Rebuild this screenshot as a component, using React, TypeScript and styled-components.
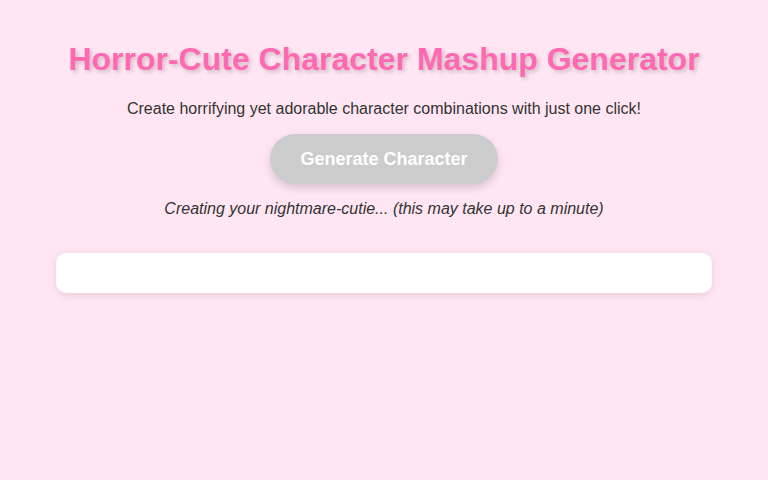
import React from "react";
import styled, { createGlobalStyle } from "styled-components";

const Global = createGlobalStyle`
  html, body { margin: 0; padding: 0; background: #ffe6f2; }
  body { font-family: "Liberation Sans", Arial, sans-serif; color: #333; }
`;

const Page = styled.div`
  min-height: 480px;
  box-sizing: border-box;
  padding: 41px 56px 20px;
  display: flex;
  flex-direction: column;
  align-items: center;
  text-align: center;
`;

const Title = styled.h1`
  margin: 0;
  font-size: 32px;
  font-weight: bold;
  color: #ff69b4;
  text-shadow: 2px 2px 4px rgba(0, 0, 0, 0.2);
`;

const Subtitle = styled.p`
  margin: 22px 0 0;
  font-size: 16px;
  color: #333;
`;

const GenerateButton = styled.button`
  margin-top: 16px;
  height: 50px;
  padding: 0 30px;
  border: none;
  border-radius: 25px;
  background: #cccccc;
  color: #fff;
  font-family: "Liberation Sans", Arial, sans-serif;
  font-size: 18px;
  font-weight: bold;
  box-shadow: 0 4px 8px rgba(0, 0, 0, 0.15);
  cursor: not-allowed;
`;

const Loading = styled.p`
  margin: 16px 0 0;
  font-size: 16px;
  font-style: italic;
  color: #333;
`;

const Card = styled.div`
  align-self: stretch;
  margin-top: 35px;
  height: 40px;
  background: #fff;
  border-radius: 10px;
  box-shadow: 0 2px 8px rgba(0, 0, 0, 0.1);
`;

export default function App() {
  return (
    <>
      <Global />
      <Page>
        <Title>Horror-Cute Character Mashup Generator</Title>
        <Subtitle>Create horrifying yet adorable character combinations with just one click!</Subtitle>
        <GenerateButton disabled>Generate Character</GenerateButton>
        <Loading>Creating your nightmare-cutie... (this may take up to a minute)</Loading>
        <Card />
      </Page>
    </>
  );
}
